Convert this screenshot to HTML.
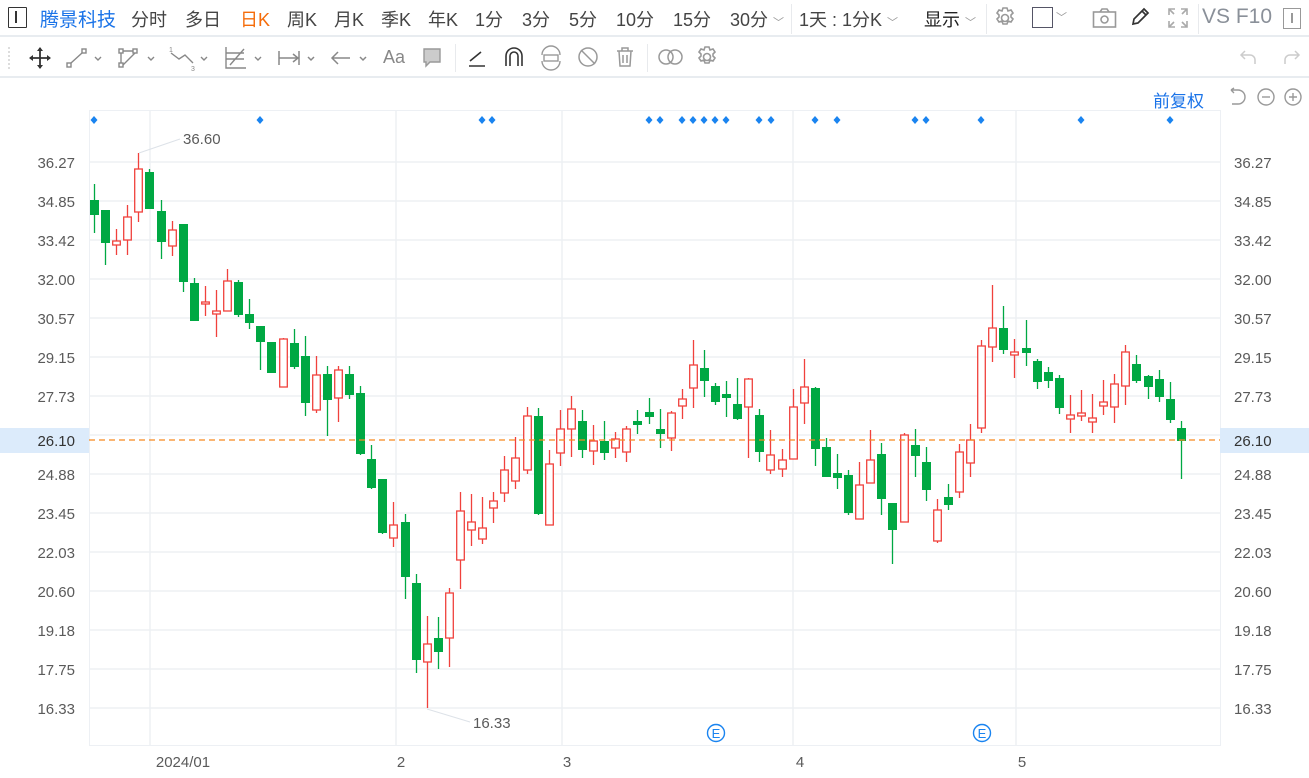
<!DOCTYPE html>
<html><head><meta charset="utf-8"><style>
*{margin:0;padding:0;box-sizing:border-box}
body{width:1309px;height:778px;overflow:hidden;background:#fff;font-family:"Liberation Sans","Noto Sans CJK SC",sans-serif;color:#333;position:relative}
.t{position:absolute;white-space:nowrap}
#tb1{position:absolute;left:0;top:0;width:1309px;height:37px;border-bottom:2px solid #e8ecf0}
#tb1 .t{top:6px;font-size:18px;color:#444}
#tb2{position:absolute;left:0;top:39px;width:1309px;height:39px;border-bottom:2px solid #e8ecf0}
.sep{position:absolute;width:1px;background:#e8eaed}
</style></head><body>
<div id="tb1">
<div style="position:absolute;left:8px;top:7px;width:19px;height:21px;border:1.5px solid #333;border-radius:1px"><div style="position:absolute;left:6px;top:3px;width:1.5px;height:12px;background:#333"></div></div>
<div class="t" style="left:40px;color:#1a73e8;font-size:19px!important;top:5px!important">腾景科技</div>
<div class="t" style="left:131px">分时</div>
<div class="t" style="left:185px">多日</div>
<div class="t" style="left:240px;color:#f56c0a">日K</div>
<div class="t" style="left:287px">周K</div>
<div class="t" style="left:334px">月K</div>
<div class="t" style="left:381px">季K</div>
<div class="t" style="left:428px">年K</div>
<div class="t" style="left:475px">1分</div>
<div class="t" style="left:522px">3分</div>
<div class="t" style="left:569px">5分</div>
<div class="t" style="left:616px">10分</div>
<div class="t" style="left:673px">15分</div>
<div class="t" style="left:730px">30分 <span style="font-size:11px;color:#999">﹀</span></div>
<div class="sep" style="left:791px;top:4px;height:30px"></div>
<div class="t" style="left:799px">1天 : 1分K <span style="font-size:11px;color:#999">﹀</span></div>
<div class="t" style="left:924px;color:#222">显示 <span style="font-size:11px;color:#999">﹀</span></div>
<div class="sep" style="left:986px;top:4px;height:30px"></div>
<svg style="position:absolute;left:993px;top:6px" width="24" height="24" viewBox="0 0 24 24" fill="none" stroke="#999" stroke-width="1.6"><path d="M10 2h4l1 3 3-1 2 3-2 2 0 2 2 2-2 3-3-1-1 3h-4l-1-3-3 1-2-3 2-2v-2l-2-2 2-3 3 1z"/><circle cx="12" cy="12" r="3.5"/></svg>
<div style="position:absolute;left:1032px;top:7px;width:21px;height:21px;border:1.5px solid #556"></div>
<div class="t" style="left:1056px;top:9px!important;font-size:11px!important;color:#999">﹀</div>
<svg style="position:absolute;left:1092px;top:7px" width="25" height="22" viewBox="0 0 25 22" fill="none" stroke="#999" stroke-width="1.6"><rect x="1.5" y="5" width="22" height="15"/><path d="M8 5l2-3h5l2 3"/><circle cx="12.5" cy="12.5" r="3.5"/></svg>
<svg style="position:absolute;left:1129px;top:6px" width="22" height="22" viewBox="0 0 22 22" fill="none" stroke="#333" stroke-width="1.7"><path d="M4 18l1-5L15 3l4 4L9 17z M13 5l4 4"/></svg>
<svg style="position:absolute;left:1167px;top:7px" width="22" height="22" viewBox="0 0 22 22" fill="none" stroke="#aaa" stroke-width="1.6"><path d="M2 8V2h6M14 2h6v6M20 14v6h-6M8 20H2v-6M2 2l5 5M20 2l-5 5M20 20l-5-5M2 20l5-5"/></svg>
<div class="sep" style="left:1198px;top:4px;height:30px"></div>
<div class="t" style="left:1202px;font-size:21px!important;top:5px!important;color:#8a9099">VS F10</div>
<div style="position:absolute;left:1283px;top:8px;width:18px;height:21px;border:1.5px solid #999"><div style="position:absolute;left:7px;top:4px;width:1.5px;height:10px;background:#999"></div></div>
</div>
<div id="tb2">
<div style="position:absolute;left:8px;top:8px;width:4px;height:22px;border-left:2px dotted #ddd"></div>
<svg style="position:absolute;left:28px;top:7px" width="24" height="24" viewBox="0 0 24 24" fill="#333" stroke="#333" stroke-width="1.8"><path d="M12 2v20M2 12h20" /><path d="M12 1l-3 4h6zM12 23l-3-4h6zM1 12l4-3v6zM23 12l-4-3v6z" stroke="none"/></svg>
<svg style="position:absolute;left:64px;top:7px" width="50" height="24" viewBox="0 0 50 24" fill="none" stroke="#888" stroke-width="1.4"><rect x="3" y="17" width="4" height="4"/><rect x="18" y="3" width="4" height="4"/><path d="M7 17l11-10"/><path d="M31 11l3 3 3-3" /></svg>
<svg style="position:absolute;left:116px;top:7px" width="46" height="24" viewBox="0 0 46 24" fill="none" stroke="#888" stroke-width="1.4"><rect x="3" y="3" width="4" height="4"/><rect x="17" y="3" width="4" height="4"/><rect x="3" y="17" width="4" height="4"/><path d="M7 5h10M5 7v10M19 7L7 19"/><path d="M32 11l3 3 3-3"/></svg>
<svg style="position:absolute;left:166px;top:5px" width="48" height="28" viewBox="0 0 48 28" fill="none" stroke="#888" stroke-width="1.4"><path d="M5 9l8 6 6-4 8 8"/><text x="3" y="8" font-size="7" fill="#888" stroke="none">1</text><text x="25" y="27" font-size="7" fill="#888" stroke="none">3</text><path d="M35 13l3 3 3-3"/></svg>
<svg style="position:absolute;left:222px;top:6px" width="46" height="26" viewBox="0 0 46 26" fill="none" stroke="#888" stroke-width="1.4"><path d="M4 2v21h20M4 8h18M4 14h18M8 20L22 4"/><path d="M33 12l3 3 3-3"/></svg>
<svg style="position:absolute;left:276px;top:7px" width="46" height="24" viewBox="0 0 46 24" fill="none" stroke="#888" stroke-width="1.5"><path d="M3 5v14M23 5v14M3 12h19M17 8l5 4-5 4"/><path d="M32 11l3 3 3-3"/></svg>
<svg style="position:absolute;left:328px;top:7px" width="46" height="24" viewBox="0 0 46 24" fill="none" stroke="#888" stroke-width="1.5"><path d="M4 12h18M10 6l-6 6 6 6"/><path d="M32 11l3 3 3-3"/></svg>
<div class="t" style="left:383px;top:8px;font-size:18px;color:#888">Aa</div>
<svg style="position:absolute;left:421px;top:7px" width="22" height="24" viewBox="0 0 22 24" fill="#ccc" stroke="#999" stroke-width="1.4"><path d="M3 3h16v13H9l-4 4v-4H3z"/></svg>
<div class="sep" style="left:455px;top:5px;height:28px"></div>
<svg style="position:absolute;left:466px;top:7px" width="22" height="24" viewBox="0 0 22 24" fill="none" stroke="#333" stroke-width="1.6"><path d="M4 15L15 6M3 20h16"/></svg>
<svg style="position:absolute;left:502px;top:6px" width="24" height="24" viewBox="0 0 24 24" fill="none" stroke="#333" stroke-width="1.6"><path d="M4 21V11a8 8 0 0116 0v10M8 21V11a4 4 0 018 0v10"/></svg>
<svg style="position:absolute;left:538px;top:6px" width="26" height="26" viewBox="0 0 26 26" fill="none" stroke="#999" stroke-width="1.4"><rect x="6" y="10" width="14" height="6"/><path d="M4 10a9 9 0 0118 0M4 16a9 9 0 0018 0"/></svg>
<svg style="position:absolute;left:576px;top:6px" width="24" height="24" viewBox="0 0 24 24" fill="none" stroke="#999" stroke-width="1.5"><circle cx="12" cy="12" r="9"/><path d="M5 5l14 14"/></svg>
<svg style="position:absolute;left:614px;top:6px" width="22" height="24" viewBox="0 0 22 24" fill="none" stroke="#999" stroke-width="1.5"><path d="M3 6h16M8 6V3h6v3M5 6l1 15h10l1-15M9 10v8M13 10v8"/></svg>
<div class="sep" style="left:647px;top:5px;height:28px"></div>
<svg style="position:absolute;left:657px;top:8px" width="28" height="20" viewBox="0 0 28 20" fill="none" stroke="#999" stroke-width="1.5"><circle cx="9" cy="10" r="7"/><circle cx="18" cy="10" r="7"/></svg>
<svg style="position:absolute;left:695px;top:6px" width="24" height="24" viewBox="0 0 24 24" fill="none" stroke="#999" stroke-width="1.6"><path d="M10 2h4l1 3 3-1 2 3-2 2 0 2 2 2-2 3-3-1-1 3h-4l-1-3-3 1-2-3 2-2v-2l-2-2 2-3 3 1z"/><circle cx="12" cy="12" r="3.5"/></svg>
<svg style="position:absolute;left:1237px;top:8px" width="66" height="22" viewBox="0 0 66 22" fill="none" stroke="#ccc" stroke-width="1.5"><path d="M18 17v-4a5 5 0 00-5-5H4M8 4L4 8l4 4M48 17v-4a5 5 0 015-5h9M58 4l4 4-4 4"/></svg>
</div>

<div class="t" style="left:1153px;top:87px;font-size:17px;color:#1a73e8">前复权</div>
<svg style="position:absolute;left:1226px;top:86px" width="80" height="22" viewBox="0 0 80 22" fill="none" stroke="#999" stroke-width="1.4"><path d="M5 4h7a7 7 0 010 14H6M5 4l3-2M5 4l3 3"/><circle cx="40" cy="11" r="8"/><path d="M36 11h8"/><circle cx="67" cy="11" r="8"/><path d="M63 11h8M67 7v8"/></svg>

<svg id="ch" style="position:absolute;left:0;top:0" width="1309" height="778"></svg>

<script>
var s='';
var grid=[162,201,240,279,318,357,396,435,474,513,552,591,630,669,708];
var labs=['36.27','34.85','33.42','32.00','30.57','29.15','27.73',null,'24.88','23.45','22.03','20.60','19.18','17.75','16.33'];
s+='<rect x="89.5" y="110.5" width="1131" height="635" fill="none" stroke="#edf0f4"/>';
grid.forEach(function(y,i){s+='<line x1="89" x2="1220" y1="'+y+'" y2="'+y+'" stroke="#edf0f4" stroke-width="1.5"/>';
 if(labs[i]){s+='<text x="75" y="'+(y+6)+'" text-anchor="end" font-size="15" fill="#5a5a5a">'+labs[i]+'</text>';
 s+='<text x="1234" y="'+(y+6)+'" font-size="15" fill="#5a5a5a">'+labs[i]+'</text>';}});
[150,396,562,793,1016].forEach(function(x){s+='<line x1="'+x+'" x2="'+x+'" y1="110" y2="745" stroke="#edf0f4" stroke-width="1.5"/>';});
[['2024/01',183],['2',401],['3',567],['4',800],['5',1022]].forEach(function(a){s+='<text x="'+a[1]+'" y="767" text-anchor="middle" font-size="15" fill="#5a5a5a">'+a[0]+'</text>';});
var C=[
['g',184,200,215,233],['g',210,210,243,265],['r',229,241,245,255],['r',205,217,240,255],['r',153,169,212,222],
['g',169,172,209,209],['g',200,211,242,259],['r',221,230,246,256],['g',224,224,282,292],['g',278,283,321,321],
['r',286,302,304,316],['r',290,311,314,337],['r',269,281,311,311],['g',280,282,315,317],['g',299,314,323,329],
['g',326,326,342,370],['g',342,342,373,373],['r',338,339,387,387],['g',329,343,367,369],['g',336,356,403,416],
['r',356,375,410,413],['g',366,374,400,436],['r',366,370,398,422],['g',366,374,395,399],['g',386,393,454,455],
['g',445,459,488,489],['g',479,479,533,534],['r',502,525,538,547],['g',514,522,577,599],['g',574,583,660,673],
['r',616,644,662,708],['g',617,638,652,669],['r',588,593,638,667],['r',492,511,560,589],['r',494,522,530,546],
['r',497,528,539,544],['r',492,501,508,523],['r',456,470,493,502],['r',437,458,481,489],['r',407,416,470,474],
['g',408,416,514,515],['r',450,464,525,525],['r',410,429,453,466],['r',396,409,429,457],['g',410,421,450,458],
['r',425,441,451,465],['g',421,441,453,460],['r',432,439,448,458],['r',426,429,452,462],['g',410,421,425,434],
['g',398,412,417,424],['g',409,429,434,448],['r',411,413,438,451],['r',389,399,406,419],['r',340,365,388,408],
['g',350,368,381,397],['g',383,386,402,405],['g',381,394,398,417],['g',378,404,419,420],['r',378,379,407,458],
['g',409,415,452,462],['r',430,455,470,474],['r',449,460,469,477],['r',389,407,459,459],['r',359,387,403,424],
['g',387,388,449,466],['g',438,447,477,477],['g',454,473,478,489],['g',470,475,513,515],['r',462,485,519,519],
['r',430,460,483,483],['g',443,454,499,515],['g',503,503,530,564],['r',433,435,522,522],['g',429,445,456,477],
['g',447,462,490,501],['r',499,510,541,543],['g',484,497,505,510],['r',444,452,492,498],['r',424,440,463,477],
['r',340,346,428,433],['r',285,328,347,362],['g',306,328,350,354],['r',339,352,355,378],['g',320,348,353,366],
['g',359,361,382,389],['g',367,372,381,388],['g',375,378,408,414],['r',395,415,419,433],['r',390,413,416,421],
['r',394,418,422,433],['r',380,402,406,415],['r',374,384,407,423],['r',345,352,386,405],['g',355,364,381,383],
['g',375,376,387,399],['g',370,379,397,402],['g',382,399,420,423],['g',421,428,441,479]];
C.forEach(function(c,i){var x=Math.round(94+i*11.09)+0.5;var col=c[0]=='g'?'#00a843':'#f0413c';
 s+='<line x1="'+x+'" x2="'+x+'" y1="'+c[1]+'" y2="'+c[4]+'" stroke="'+col+'" stroke-width="1.3"/>';
 var h=Math.max(c[3]-c[2],2);
 if(c[0]=='g')s+='<rect x="'+(x-4.5)+'" y="'+c[2]+'" width="9" height="'+h+'" fill="'+col+'"/>';
 else s+='<rect x="'+(x-3.8)+'" y="'+c[2]+'" width="7.6" height="'+h+'" fill="#fff" stroke="'+col+'" stroke-width="1.3"/>';});
s+='<rect x="0" y="428" width="89" height="25" fill="#dcebfb"/><rect x="1220" y="428" width="89" height="25" fill="#dcebfb"/>';
s+='<text x="75" y="446" text-anchor="end" font-size="15" fill="#333">26.10</text><text x="1234" y="446" font-size="15" fill="#333">26.10</text>';
s+='<line x1="89" x2="1220" y1="440" y2="440" stroke="#f7891f" stroke-width="1.3" stroke-dasharray="6,4"/>';
[94,260,482,492,649,660,682,693,704,715,726,759,771,815,837,915,926,981,1081,1170].forEach(function(x){s+='<path d="M'+x+' 116l3.5 4-3.5 4-3.5-4z" fill="#1a84f0"/>';});
s+='<line x1="139" y1="153" x2="180" y2="139" stroke="#dde2e8"/><text x="183" y="144" font-size="15" fill="#5a5a5a">36.60</text>';
s+='<line x1="427" y1="709" x2="470" y2="722" stroke="#dde2e8"/><text x="473" y="728" font-size="15" fill="#5a5a5a">16.33</text>';
[716,982].forEach(function(x){s+='<circle cx="'+x+'" cy="733" r="8.5" fill="#fff" stroke="#1a84f0" stroke-width="1.4"/><text x="'+x+'" y="738" text-anchor="middle" font-size="13" fill="#1a84f0">E</text>';});
document.getElementById('ch').innerHTML=s;
</script>
</body></html>
